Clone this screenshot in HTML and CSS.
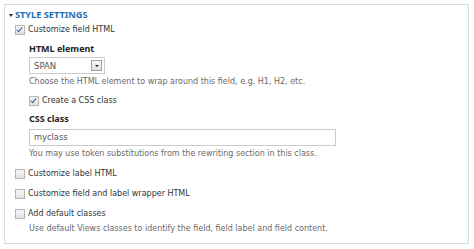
FILE: index.html
```html
<!DOCTYPE html>
<html>
<head>
<meta charset="utf-8">
<link rel="stylesheet" href="styles.css">
</head>
<body>
<div class="fieldset">
  <div class="legend"><span class="tri"></span>STYLE SETTINGS</div>
  <div class="cb-row first"><span class="cb checked"></span>Customize field HTML</div>
  <div class="sub">
    <div class="label lbl1">HTML element</div>
    <div class="select"><span>SPAN</span><span class="arrow"></span></div>
    <div class="desc">Choose the HTML element to wrap around this field, e.g. H1, H2, etc.</div>
    <div class="cb-row cb2"><span class="cb checked"></span>Create a CSS class</div>
    <div class="label lbl2">CSS class</div>
    <div class="input">myclass</div>
    <div class="desc">You may use token substitutions from the rewriting section in this class.</div>
  </div>
  <div class="cb-row cb3"><span class="cb"></span>Customize label HTML</div>
  <div class="cb-row cb4"><span class="cb"></span>Customize field and label wrapper HTML</div>
  <div class="cb-row cb5"><span class="cb"></span>Add default classes</div>
  <div class="sub">
    <div class="desc d3">Use default Views classes to identify the field, field label and field content.</div>
  </div>
</div>
</body>
</html>
```

FILE: styles.css
```css
html, body {
  margin: 0;
  padding: 0;
  background: #fff;
}
body {
  font-family: "DejaVu Sans", Verdana, sans-serif;
  font-size: 8px;
  color: #333;
}
.fieldset {
  margin: 4px 0 0 4px;
  width: 465px;
  height: 240px;
  box-sizing: border-box;
  border: 1px solid #d9d9d9;
  padding: 4px 0 0 10px;
}
.legend {
  height: 12px;
  line-height: 12px;
  font-family: "Noto Sans", "DejaVu Sans", sans-serif;
  font-weight: bold;
  color: #1d6fb8;
  font-size: 9.2px;
  display: flex;
  align-items: center;
  margin-left: -7px;
}
.tri {
  width: 0;
  height: 0;
  border-left: 2.5px solid transparent;
  border-right: 2.5px solid transparent;
  border-top: 3px solid #333;
  margin: 0 2px 0 1px;
}
.cb-row {
  height: 12px;
  line-height: 12px;
  display: flex;
  align-items: center;
}
.cb {
  width: 8px;
  height: 8px;
  border: 1px solid #b5b5b5;
  background: linear-gradient(#f7f7f7, #e2e2e2);
  margin-right: 3px;
  position: relative;
  flex: none;
}
.cb.checked::after {
  content: "";
  position: absolute;
  left: 2px;
  top: 0px;
  width: 2px;
  height: 5px;
  border-right: 1.5px solid #3a5ea0;
  border-bottom: 1.5px solid #3a5ea0;
  transform: rotate(40deg);
}
.first { margin-top: 3px; }
.sub { padding-left: 14px; }
.label {
  font-family: "Noto Sans", "DejaVu Sans", sans-serif;
  font-weight: bold;
  height: 12px;
  line-height: 12px;
  font-size: 9px;
  color: #222;
}
.lbl1 { margin-top: 7px; }
.lbl2 { margin-top: 6px; }
.select {
  margin-top: 2px;
  width: 76px;
  height: 17px;
  box-sizing: border-box;
  border: 1px solid #ccc;
  display: flex;
  align-items: center;
  justify-content: space-between;
  padding: 0 2px 0 4px;
  color: #555;
  font-size: 8.5px;
}
.arrow {
  width: 9px;
  height: 9px;
  border: 1px solid #a0a0a0;
  background: linear-gradient(#fafafa, #e0e0e0);
  position: relative;
}
.arrow::after {
  content: "";
  position: absolute;
  left: 2.5px;
  top: 3.5px;
  border-left: 2px solid transparent;
  border-right: 2px solid transparent;
  border-top: 2.5px solid #222;
}
.desc {
  margin-top: 2px;
  height: 12px;
  line-height: 12px;
  font-size: 8px;
  color: #6a6a6a;
}
.cb2 { margin-top: 7px; }
.input {
  margin-top: 4px;
  width: 307px;
  height: 17px;
  box-sizing: border-box;
  border: 1px solid #ccc;
  line-height: 15px;
  padding-left: 4px;
  color: #555;
  font-size: 8.3px;
}
.cb3 { margin-top: 8px; }
.cb4 { margin-top: 8px; }
.cb5 { margin-top: 8px; }
.d3 { margin-top: 3px; }
```
